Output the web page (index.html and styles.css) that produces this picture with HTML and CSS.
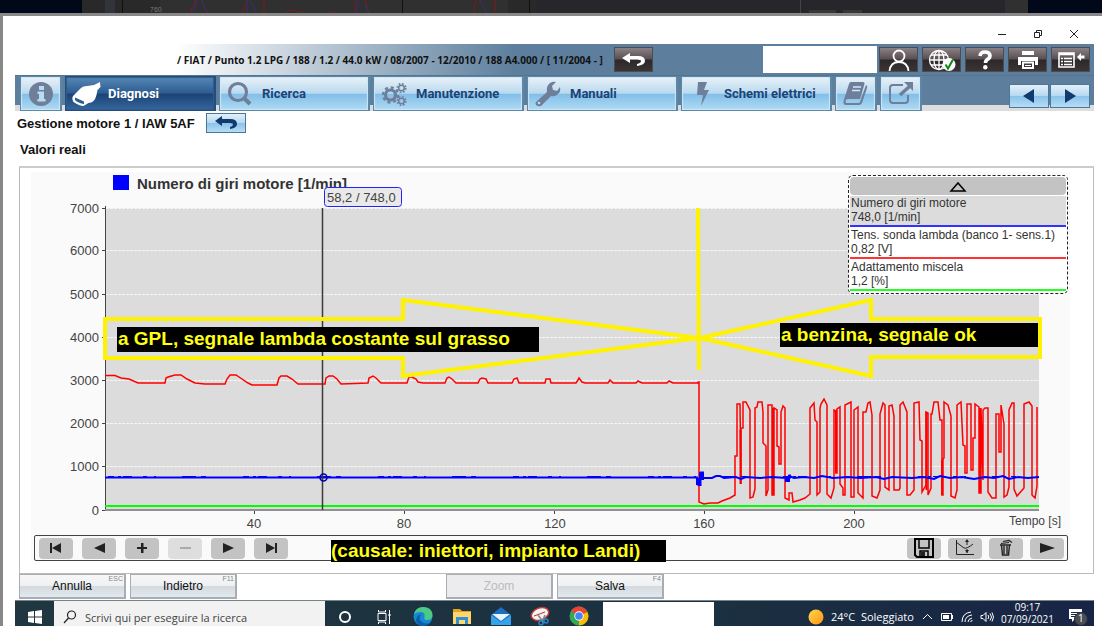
FILE: index.html
```html
<!DOCTYPE html>
<html lang="it">
<head>
<meta charset="utf-8">
<title>Valori reali</title>
<link rel="stylesheet" href="styles.css">
</head>
<body>
<svg class="backdrop" viewBox="0 0 1102 13" preserveAspectRatio="xMidYMin slice" aria-hidden="true">
  <rect width="1102" height="13" fill="#000819"/>
  <rect x="82" width="454" height="13" fill="#292929"/>
  <rect x="105" width="10" height="13" fill="#32343b"/>
  <rect x="160" width="348" height="13" fill="#303030"/>
  <path d="M122.500 0V13M402.500 0V13M529.500 0V13" stroke="#111"/>
  <text x="150" y="12" class="backdrop-text">760</text>
  <path d="M191 13l1-6 2-1 1-6M202 0l2 6 3 7M243 13l2-9 2-4M264 0v13M286 13l3-3 6 1 7 1M328 13l4-2 2 2M354 13l2-9V0M365 0l4 13M474 13l1-10 2-3M495 0v13" fill="none" stroke="#7c1a1a"/>
  <path d="M193 13l3-9 1-4M202 0l3 9 3 4M247 13V0M249 0l5 6 2 7M356 13l3-13M365 4l4 9M480 0l3 6 4 7" fill="none" stroke="#30307a"/>
  <rect x="536" width="469" height="13" fill="#26262b"/>
  <path d="M800.500 0V13" stroke="#444"/>
  <path d="M809 10h27v3h-27zM843 10h19v3h-19z" fill="#383838"/>
  <rect x="1005" width="23" height="13" fill="#303030"/>
</svg>

<main class="window">
  <div class="titlebar">
    <button class="win-btn" aria-label="Riduci"><svg width="12" height="12"><path d="M2 6.500h8"/></svg></button>
    <button class="win-btn" aria-label="Ripristina"><svg width="12" height="12"><path d="M2.500 4.500h5v5h-5zM4.500 4.500v-2h5v5h-2"/></svg></button>
    <button class="win-btn" aria-label="Chiudi"><svg width="12" height="12"><path d="M2 2l8 8M10 2l-8 8"/></svg></button>
  </div>

  <header class="vehicle">
    <span class="vehicle-name">/ FIAT / Punto 1.2 LPG / 188 / 1.2 / 44.0 kW / 08/2007 - 12/2010 / 188 A4.000 / [ 11/2004 - ]</span>
    <button class="dark-btn" aria-label="Cambia veicolo"><svg width="26" height="16" viewBox="0 0 26 16"><path fill="#fff" d="M1 6l8-5v3h8q7 0 7 5 0 4-8 5v-2q4-1 4-3 0-1.500-4-1.500H9V11z"/></svg></button>
    <input class="vehicle-search" type="text" aria-label="Cerca veicolo">
    <div class="tools">
      <button class="dark-btn" aria-label="Utente"><svg width="24" height="24" viewBox="0 0 24 24" fill="none" stroke="#fff" stroke-width="1.800"><circle cx="12" cy="8" r="5.500"/><path d="M2.500 23q1-9 9.500-9t9.500 9"/></svg></button>
      <button class="dark-btn" aria-label="Rete"><svg width="30" height="24" viewBox="0 0 30 24" fill="none" stroke="#fff" stroke-width="1.300"><circle cx="12" cy="12" r="9.500"/><ellipse cx="12" cy="12" rx="5" ry="9.500"/><path d="M12 2v20M2.500 12h19M4 7h16M4 17h16"/><circle cx="22" cy="16.500" r="6.500" fill="#fff" stroke="none"/><path d="M18.500 16.500l2.500 4 5-9" stroke="#0a8a14" stroke-width="2"/></svg></button>
      <button class="dark-btn" aria-label="Aiuto"><svg width="16" height="20" viewBox="0 0 16 20"><path d="M3 6q.5-4 5-4t5 3.500q0 2.500-2.500 3.800Q8.500 10.500 8.500 13" fill="none" stroke="#fff" stroke-width="3.600"/><circle cx="8.300" cy="17.300" r="2.200" fill="#fff"/></svg></button>
      <button class="dark-btn" aria-label="Stampa"><svg width="20" height="20" viewBox="0 0 20 20"><path fill="#fff" d="M4 1h12v4H4zM0 7h20v8h-3v-4H3v4H0z"/><path fill="#433b3e" stroke="#fff" stroke-width="2" d="M5 12.500h10v5.500H5z"/><path stroke="#fff" d="M7 15.500h6"/></svg></button>
      <button class="dark-btn" aria-label="Menu"><svg width="28" height="20" viewBox="0 0 28 20"><path fill="none" stroke="#fff" stroke-width="1.600" d="M2 3h15v14H2zM2 4.500h15"/><path stroke="#fff" stroke-width="1.500" d="M4 8.500h2m1 0h8M4 11.500h2m1 0h8M4 14.500h2m1 0h8"/><path fill="#fff" d="M20 7l4-4v2.500h3.500v3H24V11z"/></svg></button>
    </div>
  </header>

  <nav class="tabs">
    <button class="tab tab-icon" aria-label="Informazioni"><svg width="26" height="26" viewBox="0 0 26 26"><circle cx="13" cy="13" r="12" fill="#6f7f9a"/><path fill="#b7dcf4" d="M11 5h5v4h-5zM9.500 10.500H16V18h1.500v2.500h-8V18H11v-5H9.500z"/></svg></button>
    <button class="tab tab-active"><svg width="30" height="26" viewBox="0 0 30 26"><path fill="#fff" d="M1 15L9 7q2-2 6-2l7-1 6-3 .5 5-3 3-1 5q-2 8-8 8l-5 3q-4 0-10-4-2-3-.500-6z"/><path d="M3 16.500l9 4v2.500q-6-1-9-4z" fill="#2d5c91"/></svg>Diagnosi</button>
    <button class="tab"><svg width="30" height="26" viewBox="0 0 30 26" fill="none" stroke="#6f7f9a"><circle cx="12" cy="11" r="8.500" stroke-width="3.200"/><path d="M18 17l6 6" stroke-width="4"/></svg>Ricerca</button>
    <button class="tab"><svg width="30" height="26" viewBox="0 0 30 26" fill="none" stroke="#6f7f9a"><circle cx="10.500" cy="14" r="5" stroke-width="3.200"/><circle cx="10.500" cy="14" r="7.500" stroke-width="2.400" stroke-dasharray="3 2.890"/><circle cx="21.500" cy="7" r="2.800" stroke-width="1.500"/><circle cx="21.500" cy="7" r="4.300" stroke-width="1.600" stroke-dasharray="1.700 1.680"/><circle cx="21.500" cy="20" r="2.800" stroke-width="1.500"/><circle cx="21.500" cy="20" r="4.300" stroke-width="1.600" stroke-dasharray="1.700 1.680"/></svg>Manutenzione</button>
    <button class="tab"><svg width="30" height="26" viewBox="0 0 30 26"><path fill="#6f7f9a" d="M2 21L13 11q-1-6 3-9 3-2 6-1l-4 4 1 4 4 1 3-4q1 5-2 7-3 3-7 2L7 25q-3 1-5-1-1-2 0-3z"/><circle cx="5" cy="22" r="1.300" fill="#b7dcf4"/></svg>Manuali</button>
    <button class="tab"><svg width="30" height="26" viewBox="0 0 30 26"><path fill="#6f7f9a" d="M10 1h9l-3 8h5L13 25l2-11H9z"/></svg>Schemi elettrici</button>
    <button class="tab tab-icon" aria-label="Libro"><svg width="26" height="26" viewBox="0 0 26 26"><path fill="#6f7f9a" d="M8 1h12q2 0 1.500 2L17 18H5q-2 0-2.500 2l.5 2h13l1-1 6-17q2 1 1 3l-5 15q-1 2-3 2H3q-3 0-2.500-4L6 3q.5-2 2-2z"/><path d="M10 6h8M9 9.500h8" stroke="#d5e8f5" stroke-width="1.500"/></svg></button>
    <button class="tab tab-icon" aria-label="Collegamento esterno"><svg width="26" height="26" viewBox="0 0 26 26" fill="none" stroke="#6f7f9a"><path d="M15 4H5Q2 4 2 7v12q0 3 3 3h12q3 0 3-3v-5" stroke-width="2"/><path d="M12 14l10-9" stroke-width="3.500"/><path d="M16 1h9v9z" fill="#6f7f9a" stroke="none"/></svg></button>
    <div class="pager">
      <button class="light-btn" aria-label="Precedente"><svg width="12" height="14"><path fill="#123a6e" d="M11 0v14L0 7z"/></svg></button>
      <button class="light-btn" aria-label="Successivo"><svg width="12" height="14"><path fill="#123a6e" d="M1 0v14l11-7z"/></svg></button>
    </div>
  </nav>

  <div class="crumb">
    <h1>Gestione motore 1 / IAW 5AF</h1>
    <button class="light-btn" aria-label="Indietro"><svg width="24" height="14" viewBox="0 0 24 14"><path fill="#123a6e" d="M1 5l7-5v3h8q7 0 7 5 0 4-7 5v-2q3-1 3-2.500Q19 7 16 7H8v3z"/></svg></button>
  </div>
  <h2>Valori reali</h2>

  <section class="panel">
    <div class="chart">
      <svg class="plot" viewBox="31 172 1039 360" role="img" aria-label="Grafico dei valori reali">
        <rect x="106" y="208" width="933" height="302" fill="#dcdcdc"/>
        <path class="grid" d="M106 208.500H1039M106 250.500H1039M106 294.500H1039M106 337.500H1039M106 380.500H1039M106 423.500H1039M106 466.500H1039"/>
        <path d="M105.500 206V510M102 208.500h4M102 250.500h4M102 294.500h4M102 337.500h4M102 380.500h4M102 423.500h4M102 466.500h4M102 510.500h4M254.500 511v3M404.500 511v3M554.500 511v3M704.500 511v3M854.500 511v3" stroke="#444"/>
        <path d="M105 510H1039" stroke="#909090" stroke-width="2"/>
        <g class="axis" text-anchor="end">
          <text x="99" y="213">7000</text><text x="99" y="255">6000</text><text x="99" y="299">5000</text><text x="99" y="342">4000</text><text x="99" y="385">3000</text><text x="99" y="428">2000</text><text x="99" y="471">1000</text><text x="99" y="515">0</text>
        </g>
        <g class="axis" text-anchor="middle">
          <text x="254" y="528">40</text><text x="404" y="528">80</text><text x="555" y="528">120</text><text x="704" y="528">160</text><text x="854" y="528">200</text>
        </g>
        <text class="unit" x="1061" y="525" text-anchor="end">Tempo [s]</text>
        <rect x="113" y="175" width="16" height="15" fill="#00f"/>
        <text class="series-title" x="137" y="189">Numero di giri motore [1/min]</text>
        <path d="M105 506H1039" stroke="#0f0" stroke-width="2"/>
        <path class="lambda" d="M105 375.500H115L121 378 129 379 138 383H165L166 378 168 377 175 375H181L187 379 195 383 205 384H225L227 379 230 375H236L242 379 248 383 252 385H277L279 378 281 376H287L292 379 298 384H325L326 378 329 376H333L337 379 341 384 368 383 369 378 373 376 376 378 381 383H407L409 377H412L416 379 418 382 423 383H445L447 378 449 377 452 379 456 383H478L480 379 482 378 486 379 488 383H512L514 379 517 378 519 383H545L546 379H550L551 383H576L578 380 579 378 582 382 585 383H608L610 380 613 383H636L638 381 642 383H667L669 381 673 383H697L699 382V502L704 504 710 503H718L722 501 730 498 735 495V456H737V404H740L741 484V428H743V402H746L747 404 750 410V498L753 497 755 489V408L757 407 758 402H762L763 412V443L766 446V496L768 490V405H772V495H774V408L777 410V446L779 447V464H781V412L783 406 785 408V498L789 500V493H792L793 502 800 500 805 498 810 494V408L814 403 815 420 817 422V495L820 492V408L821 404 824 399 827 405V494L831 498 834 488V410L836 411V473H837V409L840 407V484L843 488V495H845V405L851 402V497H854V410L858 407V493L863 498V412H866L868 403 870 402 872 415V496L877 498 880 490V414L883 403 885 405V487L889 490V406L892 405 894 416V490H899L900 488V405L903 402 907 412V495H910L914 490V403L919 402 920 440 922 441V492L926 485V412L928 413V495L931 488V414H932L934 402H938L940 420H942V495H943V459L944 458V402L948 405 951 416V496L955 498 957 490V405L961 402 963 445 965 446V473H967V404H971V470H973V438H975V404L979 407V493H981V408L983 480V410L985 408H988V492L992 498H996V414H999V452H1001V405L1004 424V497L1007 495 1009 487V410L1012 403H1014V489L1017 496 1024 488V404L1029 402 1032 406V495L1035 498 1037 486V407"/>
        <path d="M773 408V495M836 411V473M926.500 412V490M942 460V495M980 408V492M740.500 430V484" stroke="#f00" stroke-width="2"/>
        <path class="rpm" d="M105 477.500H697V484H700V473H702V478H712L716 476H720L724 478 736 477 741 479 746 477 760 478 772 477 786 478V481H789V476L794 478 804 477 814 478 822 476 833 478 848 477 860 478 876 477 884 479 892 477 912 478 924 477 934 479 940 476 950 478 962 477 974 479 985 477 994 478 1003 476 1009 479 1018 477 1028 478 1039 477"/>
        <path d="M108 476.500H1039" stroke="#00f" stroke-dasharray="6 4 3 2 9 11 4 7 2 26 14 5 5 37"/>
        <path d="M697.500 478h4V486h-4zM700 471.500h4V480h-4zM787 477h3v5h-3zM789 474.500h2v4h-2z" fill="#00f"/>
        <path d="M322.500 208V510" stroke="#3a3a3a" stroke-width="1.500"/>
        <circle cx="323.500" cy="477.500" r="3.500" fill="none" stroke="#00a" stroke-width="1.500"/>
        <rect x="324.500" y="187.500" width="77" height="19" rx="3" fill="#e9e9e9" stroke="#22f"/>
        <text class="axis" x="327" y="202">58,2 / 748,0</text>
        <path class="arrow" d="M105 319H403V300L699 338 403 376V358H105zM1040 319H871V300L700 338 871 376V357H1040zM698 208L699 370"/>
        <rect x="117" y="327" width="422" height="25"/>
        <text class="note" x="118" y="345">a GPL, segnale lambda costante sul grasso</text>
        <rect x="780" y="323" width="258" height="24"/>
        <text class="note" x="781" y="341">a benzina, segnale ok</text>
      </svg>
      <aside class="legend">
        <button class="legend-toggle" aria-label="Comprimi legenda"><svg width="18" height="12"><path d="M2 11L9 3l7 8z" fill="none" stroke="#000" stroke-width="1.500"/></svg></button>
        <p class="legend-item blue">Numero di giri motore<br>748,0 [1/min]</p>
        <p class="legend-item red">Tens. sonda lambda (banco 1- sens.1)<br>0,82 [V]</p>
        <p class="legend-item green">Adattamento miscela<br>1,2 [%]</p>
      </aside>
      <div class="controls">
        <div class="group">
          <button class="ctl" aria-label="Inizio"><svg width="14" height="12"><path d="M1 1h2v10H1zM12 1v10L3 6z"/></svg></button>
          <button class="ctl" aria-label="Indietro"><svg width="14" height="12"><path d="M13 1v10L2 6z"/></svg></button>
          <button class="ctl" aria-label="Ingrandisci"><svg width="14" height="12"><path d="M6 1h2.500v4H12v2H8.500v4H6V7H2V5h4z"/></svg></button>
          <button class="ctl" aria-label="Riduci" disabled><svg width="14" height="12"><path d="M2 5h11v2H2z"/></svg></button>
          <button class="ctl" aria-label="Avanti"><svg width="14" height="12"><path d="M2 1v10l11-5z"/></svg></button>
          <button class="ctl" aria-label="Fine"><svg width="14" height="12"><path d="M11 1h2v10h-2zM2 1v10l9-5z"/></svg></button>
        </div>
        <p class="cause">(causale: iniettori, impianto Landi)</p>
        <div class="group group-right">
          <button class="ctl" aria-label="Salva grafico"><svg width="20" height="20" viewBox="0 0 20 20"><path d="M1 1h18v18H3l-2-2z" fill="none" stroke="#000" stroke-width="2"/><path d="M5 1v9h10V1M6 18v-5h8v5" fill="none" stroke="#000" stroke-width="1.500"/><path d="M7 14h4v4H7z"/></svg></button>
          <button class="ctl" aria-label="Scala"><svg class="outline" width="22" height="18" viewBox="0 0 22 18"><path d="M2.500 1v14.500H20M2 3l8 6q3 1 9-4M13 2v4M13 10v4"/><path d="M13 0l2 3h-4zM13 14l2-3h-4z" fill="#222" stroke="none"/></svg></button>
          <button class="ctl" aria-label="Elimina"><svg class="outline" width="16" height="18" viewBox="0 0 16 18"><path d="M2 6h11M3.500 6l1 10h6l1-10M6 7v8M9 7v8" stroke-width="1.400"/><path d="M3 4.500l8-1M5 2.500l6-1 3 2" stroke-width="1.200"/></svg></button>
          <button class="ctl" aria-label="Riproduci"><svg width="18" height="12"><path d="M2 1v10l15-5z"/></svg></button>
        </div>
      </div>
    </div>
  </section>

  <div class="actions">
    <button class="action">Annulla<kbd>ESC</kbd></button>
    <button class="action">Indietro<kbd>F11</kbd></button>
    <button class="action action-middle" disabled>Zoom</button>
    <button class="action">Salva<kbd>F4</kbd></button>
  </div>

  <footer class="taskbar">
    <button class="task start" aria-label="Start"><svg width="14" height="14"><path fill="#fff" d="M0 2l6-1v5.500H0zM7 1l7-1v6.500H7zM0 7.500h6V13l-6-1zM7 7.500h7V14l-7-1z"/></svg></button>
    <label class="search"><svg width="14" height="14" viewBox="0 0 14 14" fill="none" stroke="#222" stroke-width="1.200"><circle cx="8.500" cy="5" r="4"/><path d="M5.500 8L1 13"/></svg><input type="text" placeholder="Scrivi qui per eseguire la ricerca"></label>
    <div class="apps">
      <button class="task" aria-label="Cortana"><svg width="20" height="20"><circle cx="10" cy="11" r="5" fill="none" stroke="#fff" stroke-width="2"/></svg></button>
      <button class="task" aria-label="Visualizzazione attività"><svg width="20" height="20" fill="none" stroke="#fff"><path d="M4 7.500h8v7H4zM4.500 4v2h7V4M4.500 18v-2h7v2M15.500 4v14M14 9h3"/></svg></button>
      <button class="task" aria-label="Edge"><svg width="20" height="20" viewBox="0 0 20 20"><circle cx="10" cy="10.500" r="9.500" fill="#1589d6"/><path d="M1 8Q3 1 10 1q9 0 9.500 8 0 5-6 5-3 0-2-3 1-5-4-5-4 0-6.500 2z" fill="#4cc984"/><path d="M8 8q-3 5 1 8 4 3 9 0-3 4-8 4-7-1-7-6 1-5 5-6z" fill="#0b5ea8"/></svg></button>
      <button class="task" aria-label="Esplora file"><svg width="20" height="20"><path fill="#e5a21b" d="M1 3h7l2 2h9v3H1z"/><path fill="#ffd667" d="M1 6h18v12H1z"/><path fill="#2f8fdc" d="M4 11h12v7h-3v-4H7v4H4z"/></svg></button>
      <button class="task" aria-label="Posta"><svg width="20" height="20"><path fill="#1b6fbf" d="M0 9l10-8 10 8v10H0z"/><path fill="#e8f4fd" d="M1 8h18l-9 7z"/><path fill="#35a3ea" d="M0 9l10 7 10-7v10H0z"/></svg></button>
      <button class="task" aria-label="Strumento di cattura"><svg width="20" height="20"><ellipse cx="10" cy="8" rx="9" ry="6" transform="rotate(-20 10 8)" fill="#f3f3f3" stroke="#c43838" stroke-width="1.500"/><path d="M4 10l11-4" stroke="#b33"/><path d="M8 9l6 8M15 9l-3 7" stroke="#888" stroke-width="1.500"/><circle cx="11" cy="17" r="2" fill="none" stroke="#2285d0" stroke-width="1.500"/><circle cx="16" cy="15" r="2" fill="none" stroke="#2285d0" stroke-width="1.500"/></svg></button>
      <button class="task" aria-label="Chrome"><svg width="20" height="20"><circle cx="10" cy="10" r="9.500" fill="#34a853"/><path fill="#ea4335" d="M10 10L2 5q3-4.500 8-4.500T18.500 6z"/><path fill="#fbbc05" d="M10 10l8.500-4q2 5-.5 9t-8 4.500z"/><circle cx="10" cy="10" r="4.700" fill="#fff"/><circle cx="10" cy="10" r="3.800" fill="#4285f4"/></svg></button>
    </div>
    <div class="blank"></div>
    <div class="tray">
      <svg width="16" height="16"><defs><linearGradient id="sun" x2="1" y2="1"><stop stop-color="#ffd84a"/><stop offset="1" stop-color="#ff9315"/></linearGradient></defs><circle cx="8" cy="8" r="7.500" fill="url(#sun)"/></svg>
      <span class="weather">24°C&nbsp; Soleggiato</span>
      <svg width="12" height="12" fill="none" stroke="#fff"><path d="M2 8l4.500-4.500L11 8"/></svg>
      <svg width="14" height="12" fill="none" stroke="#fff"><path d="M1.500 2.500h10v7h-10zM12.500 4v4"/><path d="M3 4h6v4H3z" fill="#fff" stroke="none"/></svg>
      <svg width="12" height="12" fill="none" stroke="#fff"><path d="M1 11Q1 2 10 1M4 11q0-6 7-7M7 11q0-3 4-4M9.500 11q0-1 2-1.500"/></svg>
      <svg width="14" height="12" fill="none" stroke="#fff"><path d="M1 4.500h2l3-3v9l-3-3H1zM8 4q1.500 2 0 4M10 2.500q3 3.500 0 7M12 1.500q3 4.500 0 9"/></svg>
      <time class="clock">09:17<br>07/09/2021</time>
      <button class="task notice" aria-label="Notifiche"><svg width="20" height="20" viewBox="0 0 20 20"><path fill="#fff" d="M1 3h13v10H7l-3 3v-3H1z"/><path stroke="#1c2b40" d="M3 6.500h9M3 8.500h9M3 10.500h6"/><circle cx="13" cy="13" r="6.500" fill="#4b4d52" stroke="#1c2b40"/><text x="10" y="16" class="badge">1</text></svg></button>
    </div>
  </footer>
</main>
</body>
</html>
```

FILE: styles.css
```css
* { box-sizing: border-box; margin: 0; padding: 0; }
html, body { height: 100%; }
body {
  display: flex;
  flex-direction: column;
  overflow: hidden;
  background: #fff;
  color: #111;
  font-family: "Liberation Sans", Arial, sans-serif;
}
svg { display: block; flex: none; }
button, input { font: inherit; color: inherit; border: 0; background: none; }

.backdrop { width: 100%; height: 13px; }
.backdrop-text { font-size: 7px; fill: #777; }

.window {
  flex: 1;
  display: flex;
  flex-direction: column;
  min-height: 0;
  padding: 0 8px 0 12px;
  border-top: 3px solid #888;
  border-left: 3px solid #888;
  background: #fff;
}
.titlebar { display: flex; justify-content: flex-end; align-items: center; gap: 24px; height: 28px; padding: 8px 14px 0 0; }
.win-btn svg { fill: none; stroke: #222; }

.vehicle {
  display: flex;
  align-items: center;
  height: 32px;
  padding: 0 4px 0 162px;
  background: linear-gradient(90deg, #fff 160px, #5d7f9d 500px);
  border-bottom: 1px solid #55758f;
}
.vehicle-name { flex: none; width: 437px; font-family: "Open Sans", "Liberation Sans", sans-serif; font-size: 10px; font-weight: bold; white-space: nowrap; }
.dark-btn {
  display: flex;
  align-items: center;
  justify-content: center;
  width: 39px;
  height: 25px;
  border: 1px solid #4b4d55;
  background: linear-gradient(#8a8184, #594f52 48%, #2d2829 52%, #3a3435);
}
.vehicle-search { width: 114px; height: 27px; margin-left: auto; background: #fff; }
.tools { display: flex; gap: 4px; margin-left: 2px; }

.tabs {
  display: flex;
  gap: 3px;
  height: 35px;
  padding: 0 4px 0 5px;
  background: linear-gradient(#5d7f9d 29px, #ddd 29px);
}
.tab {
  display: flex;
  align-items: center;
  gap: 6px;
  width: 151px;
  padding-left: 6px;
  border: 1px solid #5d87a6;
  border-right-width: 2px;
  background: linear-gradient(#eaf2f8, #b9d9ef 49%, #82bfe9 53%, #b0dbf4);
  box-shadow: inset 0 0 1px 1px #cfe6f5;
  color: #1c4374;
  font-family: Roboto, "Liberation Sans", sans-serif;
  font-size: 13px;
  font-weight: bold;
  white-space: nowrap;
}
.tab-icon { width: 42px; padding: 0; justify-content: center; }
.tab-active {
  background: linear-gradient(#5788b5, #2d5d92 48%, #1c4477 53%, #35669d);
  box-shadow: inset 0 0 1px 1px #2f5d90;
  border-color: #244d7c;
  color: #fff;
}
.pager { display: flex; gap: 1px; margin-left: auto; padding-top: 8px; }
.light-btn {
  display: flex;
  align-items: center;
  justify-content: center;
  width: 40px;
  height: 24px;
  border: 1px solid #4b7899;
  background: linear-gradient(#e4f0f9, #b7d9f1 48%, #8ac3eb 52%, #b7ddf5);
}
.crumb { display: flex; align-items: center; gap: 11px; height: 24px; padding-left: 2px; }
.crumb .light-btn { height: 20px; }
h1, h2 { font-size: 13px; font-weight: bold; white-space: nowrap; }
h2 { padding: 6px 0 8px 5px; line-height: 17px; }

.panel { margin-left: 4px; padding: 4px 23px 12px 11px; border: 1px solid #bbb; border-top: 2px solid #ccc; }
.chart { position: relative; background: #fafafa; }
.plot { width: 100%; height: auto; }
.grid { stroke: #f6f6f6; stroke-dasharray: 3 1; }
.axis { font-size: 13px; fill: #444; }
.unit { font-size: 12px; fill: #444; }
.series-title { font-size: 15px; font-weight: bold; fill: #333; }
.lambda { fill: none; stroke: #f00; stroke-width: 1.500; }
.rpm { fill: none; stroke: #00f; stroke-width: 2; }
.arrow { fill: none; stroke: #fff200; stroke-width: 4; }
.note { font-size: 19px; font-weight: bold; fill: #ffff10; }

.legend {
  position: absolute;
  top: 3px;
  right: 2px;
  width: 220px;
  padding: 1px;
  border: 1px dashed #222;
  border-radius: 5px;
  background: #fff;
  color: #333;
  font-size: 12px;
  line-height: 14px;
}
.legend-toggle { display: flex; align-items: center; justify-content: center; width: 100%; height: 18px; margin-bottom: 1px; border-radius: 4px; background: #c3c3c3; }
.legend-item { padding: 0 1px 1px; margin-bottom: 1px; border-bottom: 2px solid; white-space: nowrap; }
.blue { background: #dcdcdc; border-color: #33f; }
.red { border-color: #f33; }
.green { border-color: #2f2; }

.controls { display: flex; align-items: center; height: 26px; margin: 3px 2px 0 3px; padding: 0 3px 0 4px; border: 1px solid #444; border-radius: 2px; }
.group { display: flex; gap: 9px; }
.group-right { gap: 7px; margin-left: auto; }
.ctl { display: flex; align-items: center; justify-content: center; width: 34px; height: 21px; border-radius: 4px; background: #c3c3c3; }
.ctl svg { fill: #222; }
.ctl .outline { fill: none; stroke: #222; }
.ctl:disabled { background: #dedede; }
.ctl:disabled svg { fill: #aaa; }
.cause { width: 335px; height: 22px; margin: 5px 0 0 43px; background: #000; color: #ffff10; font-size: 19px; font-weight: bold; line-height: 22px; white-space: nowrap; }

.actions { display: flex; gap: 4px; padding: 0 0 1px 4px; }
.action {
  position: relative;
  width: 107px;
  height: 25px;
  border: 1px solid #a9adb3;
  border-width: 1px 2px 2px 1px;
  background: linear-gradient(#f7f7f8, #eef0f2 48%, #d6dade 52%, #dfe9f0);
  font-size: 12px;
}
.action:disabled { color: #bbb; background: #ececee; }
.action-middle { margin-left: 205px; }
.action kbd { position: absolute; top: 0; right: 1px; color: #888; font: 7px "Liberation Sans", Arial, sans-serif; }

.taskbar {
  flex: 1;
  display: flex;
  align-items: flex-start;
  min-height: 25px;
  overflow: hidden;
  background: linear-gradient(90deg, #203640, #1b3040 65%, #182446);
  border-top: 1px solid #77838a;
  color: #fff;
  font-family: "Open Sans", "Noto Sans", sans-serif;
  font-size: 11px;
}
.task { display: flex; justify-content: center; width: 39px; padding-top: 5px; }
.start { padding-top: 9px; }
.search { display: flex; align-items: center; gap: 8px; width: 271px; height: 32px; padding-left: 9px; background: #f2f2f2; }
.search input { flex: 1; min-width: 0; }
.search input::placeholder { color: #444; opacity: 1; }
.apps { display: flex; }
.blank { width: 111px; height: 32px; margin: 1px 0 0 5px; background: #fff; }
.tray { display: flex; align-items: center; gap: 7px; height: 31px; margin-left: auto; white-space: nowrap; }
.clock { align-self: flex-start; font-size: 10px; line-height: 12px; text-align: center; }
.notice { align-self: flex-start; width: 33px; }
.badge { font-size: 10px; fill: #fff; }
```
